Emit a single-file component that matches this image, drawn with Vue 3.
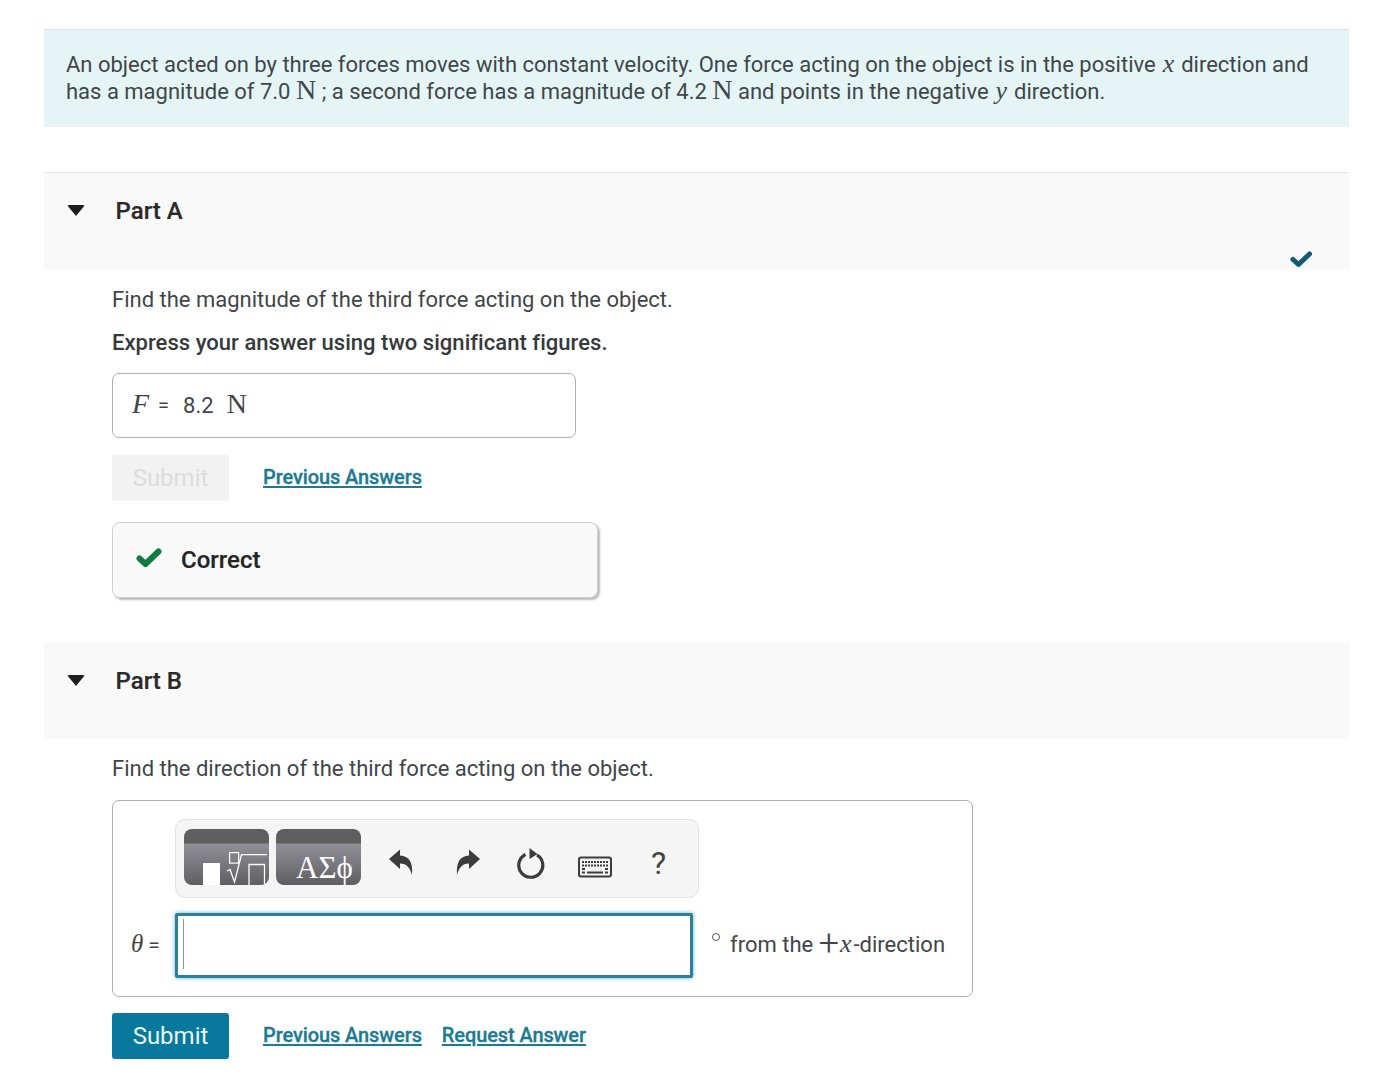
<script setup>
</script>

<template>
  <main class="page">
    <section class="intro">
      <p>An object acted on by three forces moves with constant velocity. One force acting on the object is in the positive <i class="mi">x</i> direction and<br>has a magnitude of 7.0 <span class="mu">N</span> ; a second force has a magnitude of 4.2 <span class="mu">N</span> and points in the negative <i class="mi">y</i> direction.</p>
    </section>

    <header class="part-head first">
      <span class="caret"></span>
      <h2>Part A</h2>
      <svg class="done" viewBox="0 0 22 18" width="22" height="18"><path d="M3 9.5 8.5 14.5 19.5 4" fill="none" stroke="#0f5a75" stroke-width="5" stroke-linecap="round" stroke-linejoin="round"/></svg>
    </header>
    <div class="part-body">
      <p class="q">Find the magnitude of the third force acting on the object.</p>
      <p class="hint">Express your answer using two significant figures.</p>
      <div class="answer">
        <i class="mf">F</i><span class="eq">=</span><span class="val">8.2</span><span class="unit">N</span>
      </div>
      <div class="actions a1">
        <button class="btn off">Submit</button>
        <a class="lnk">Previous Answers</a>
      </div>
      <div class="correct">
        <svg viewBox="0 0 26 22" width="26" height="22"><path d="M3.5 11.5 9.5 17 22.5 4.5" fill="none" stroke="#0f7c42" stroke-width="6" stroke-linejoin="round" stroke-linecap="round"/></svg>
        <strong>Correct</strong>
      </div>
    </div>

    <header class="part-head second">
      <span class="caret"></span>
      <h2>Part B</h2>
    </header>
    <div class="part-body">
      <p class="q">Find the direction of the third force acting on the object.</p>
      <div class="editor">
        <div class="toolbar">
          <div class="tool t1">
            <svg viewBox="0 0 85 57" width="85" height="57" class="rad">
              <rect x="19" y="34" width="17" height="23" fill="#fff"/>
              <rect x="45.6" y="23.6" width="9" height="10.5" fill="none" stroke="#fff" stroke-width="1.2"/>
              <path d="M43 42 46 40.5 50.5 53 57.5 25.6H83" fill="none" stroke="#fff" stroke-width="1.3"/>
              <path d="M65 57V35.5H80.5V57" fill="none" stroke="#fff" stroke-width="1.3"/>
            </svg>
          </div>
          <div class="tool t2"><span>ΑΣϕ</span></div>
          <svg class="ic undo" viewBox="0 0 26 28" width="26" height="28"><path d="M1 11 12 1.5V7.5C21 8 25 14 24 27 22 20 19 15.5 12 15.5V21Z" fill="#3c3c3c"/></svg>
          <svg class="ic redo" viewBox="0 0 26 28" width="26" height="28"><path d="M25 11 14 1.5V7.5C5 8 1 14 2 27 4 20 7 15.5 14 15.5V21Z" fill="#3c3c3c"/></svg>
          <svg class="ic reset" viewBox="0 0 30 32" width="30" height="32"><path d="M9.5 7.5A12 12 0 1 0 21 8" fill="none" stroke="#3c3c3c" stroke-width="3.2"/><path d="M13.5 1 21.5 7 13.5 12Z" fill="#3c3c3c"/></svg>
          <svg class="ic keys" viewBox="0 0 34 22" width="34" height="22">
            <rect x="1" y="1.5" width="32" height="19" rx="2" fill="none" stroke="#3c3c3c" stroke-width="2"/>
            <path d="M4 6H30M4 9.5H30" stroke="#3c3c3c" stroke-width="2" stroke-dasharray="2 1"/>
            <path d="M4 13H7M27 13H30M9 16.5H25M4 16.5H7M27 16.5H30" stroke="#3c3c3c" stroke-width="2"/>
          </svg>
          <span class="help">?</span>
        </div>
        <div class="entry">
          <span class="lbl"><i class="theta">θ</i><span class="eq2">=</span></span>
          <div class="field"><span class="cursor"></span></div>
          <span class="deg"></span>
          <span class="after">from the <span class="plus">+</span><i class="mi">x</i>-direction</span>
        </div>
      </div>
      <div class="actions a2">
        <button class="btn on">Submit</button>
        <a class="lnk">Previous Answers</a>
        <a class="lnk">Request Answer</a>
      </div>
    </div>
  </main>
</template>

<style>
html, body { background: #fff; }
</style>

<style scoped>
.page {
  box-sizing: border-box;
  height: 1080px;
  padding: 29px 29px 0 44px;
  font-family: Roboto, "Liberation Sans", sans-serif;
  color: #3f4649;
  overflow: hidden;
}
p, h2 { margin: 0; }
.intro {
  box-sizing: border-box;
  height: 98px;
  background: #e5f5f6;
  border-top: 1px solid #dde3e3;
  padding: 21px 22px 0;
  font-size: 22px;
  line-height: 27px;
  white-space: nowrap;
}
.mi { font-family: "Liberation Serif", serif; font-style: italic; font-size: 26px; line-height: 0; margin: 0 1.5px; }
.mu { font-family: "Liberation Serif", serif; font-size: 28px; line-height: 0; }
.part-head {
  box-sizing: border-box;
  height: 96px;
  background: #f9f9f9;
  position: relative;
  display: flex;
  align-items: flex-start;
  padding: 25px 0 0 23px;
}
.part-head.first { height: 97px; margin-top: 45px; border-top: 1px solid #e4e4e4; }
.part-head.second { margin-top: 45px; }
.caret {
  width: 0; height: 0;
  margin-top: 7px;
  border-left: 9.5px solid transparent;
  border-right: 9.5px solid transparent;
  border-top: 11px solid #1e1e1e;
  border-radius: 2px;
}
h2 {
  margin: -1px 0 0 30.5px;
  font-size: 24px;
  font-weight: 500;
  line-height: 28px;
  color: #2a2a2a;
  -webkit-text-stroke: 0.2px #2a2a2a;
}
.done { position: absolute; right: 37px; bottom: 1px; }
.part-body { padding-left: 68px; }
.q { padding-top: 17px; font-size: 22px; line-height: 28px; }
.part-head.second + .part-body .q { padding-top: 16px; }
.hint { margin-top: 15px; font-size: 22px; line-height: 28px; font-weight: 500; color: #34393b; letter-spacing: 0.04px; }
.answer {
  box-sizing: border-box;
  width: 464px;
  height: 65px;
  margin-top: 16px;
  border: 1px solid #aeb0b0;
  border-radius: 7px;
  display: flex;
  align-items: center;
  padding: 0 0 4px 19px;
}
.mf { font-family: "Liberation Serif", serif; font-size: 28px; color: #444; }
.eq { font-size: 20px; margin: 3px 0 0 9px; }
.val { font-size: 22px; margin: 3px 0 0 14px; }
.unit { font-family: "Liberation Serif", serif; font-size: 28px; margin-left: 13px; color: #444; }
.actions { display: flex; align-items: center; height: 46px; }
.a1 { margin-top: 17px; }
.a2 { margin-top: 16px; }
.btn {
  width: 117px;
  height: 46px;
  margin-right: 34px;
  border: 0;
  border-radius: 3px;
  padding: 0;
  font: 400 24px Roboto, sans-serif;
}
.off { background: #f2f2f2; color: #dcdcdc; }
.on { background: #08799c; color: #eaf6f9; }
.lnk {
  font-size: 20px;
  font-weight: 500;
  color: #1d7a94;
  -webkit-text-stroke: 0.3px #1d7a94;
  text-decoration: underline;
  text-decoration-thickness: 2px;
  text-underline-offset: 2px;
  margin-right: 20px;
  letter-spacing: -0.1px;
  margin-top: -2px;
}
.correct {
  box-sizing: border-box;
  width: 486px;
  height: 76px;
  margin-top: 21px;
  background: #f9f9f9;
  border: 1px solid #cfcfcf;
  border-radius: 8px;
  box-shadow: 2px 2px 2px #bdbdbd;
  display: flex;
  align-items: center;
  padding: 0 0 1px 23px;
}
.correct svg { margin-bottom: 4px; }
.correct strong { margin-left: 19px; font-size: 24px; font-weight: 500; color: #252525; -webkit-text-stroke: 0.2px #252525; }
.editor {
  box-sizing: border-box;
  width: 861px;
  height: 197px;
  margin-top: 17px;
  border: 1px solid #aeb0b0;
  border-radius: 7px;
  padding: 18px 0 0 62px;
}
.toolbar {
  box-sizing: border-box;
  width: 524px;
  height: 79px;
  background: #f5f5f5;
  border: 1px solid #e2e2e2;
  border-radius: 10px;
  display: flex;
  align-items: center;
  padding-left: 8px;
  position: relative;
}
.tool {
  box-sizing: border-box;
  height: 56px;
  margin-top: -3px;
  border-radius: 8px;
  background: linear-gradient(#5e5e5e 0 14px, #8f8f96 15px, #5f5f63 100%);
  position: relative;
  overflow: hidden;
}
.t1 { width: 85px; }
.t2 { width: 85px; margin-left: 7px; }
.rad { position: absolute; left: 0; top: 0; }
.t2 span {
  position: absolute; left: 20px; top: 21px;
  font: 31px "Liberation Serif", "DejaVu Serif", serif; color: #fff; white-space: nowrap;
}
.ic { position: absolute; }
.undo { left: 212px; top: 28px; }
.redo { left: 279px; top: 28px; }
.reset { left: 340px; top: 27px; }
.keys { left: 402px; top: 36px; }
.help { position: absolute; left: 475px; top: 24px; font-size: 32px; color: #444; }
.entry { display: flex; align-items: flex-start; margin: 15px 0 0 -62px; position: relative; }
.lbl { width: 62px; box-sizing: border-box; padding: 17px 0 0 18px; white-space: nowrap; }
.theta { font: italic 25px "Liberation Serif", serif; color: #444; }
.eq2 { font-size: 21px; margin-left: 5px; }
.field {
  box-sizing: border-box;
  width: 518px;
  height: 65px;
  background: #fff;
  border: 3px solid #2f7f98;
  box-shadow: 0 0 4px #58b2cb;
  border-radius: 2px;
  padding: 3px 0 0 5px;
}
.cursor { display: block; width: 1px; height: 50px; background: #7f9aa4; }
.deg { box-sizing: border-box; width: 8px; height: 8px; margin: 20px 0 0 19px; border: 1px solid #555; border-radius: 50%; }
.after { margin-left: 10px; padding-top: 18px; font-size: 22px; line-height: 28px; white-space: nowrap; }
.after .mi { margin: 0 2px 0 1px; }
.plus { font: 300 36px Roboto, sans-serif; line-height: 0; vertical-align: -3px; margin: 0; }
</style>
